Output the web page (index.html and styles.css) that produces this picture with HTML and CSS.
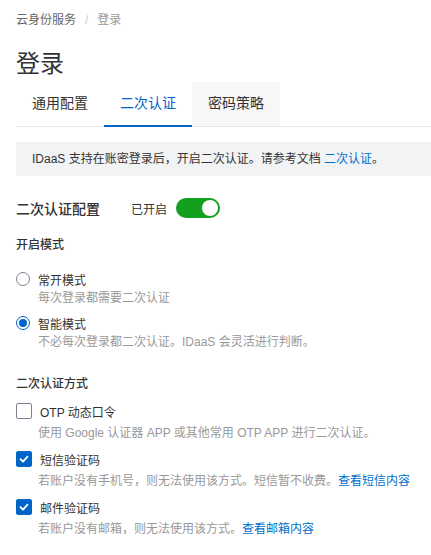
FILE: index.html
```html
<!DOCTYPE html>
<html lang="zh-CN">
<head>
    <meta charset="UTF-8">
    <meta name="viewport" content="width=device-width, initial-scale=1.0">
    <title>登录 - 二次认证</title>
    <link rel="stylesheet" href="styles.css">
</head>
<body>
    <div class="page">
        <div class="breadcrumb">
            <span>云身份服务</span>
            <span class="sep">/</span>
            <span class="current">登录</span>
        </div>
        <h1 class="title">登录</h1>

        <div class="tabs">
            <div class="tab">通用配置</div>
            <div class="tab active">二次认证</div>
            <div class="tab muted">密码策略</div>
        </div>

        <div class="notice">IDaaS 支持在账密登录后，开启二次认证。请参考文档 <a href="#" class="link">二次认证</a>。</div>

        <div class="switch-row">
            <span class="switch-title">二次认证配置</span>
            <span class="switch-state">已开启</span>
            <span class="switch on"></span>
        </div>

        <!-- 开启模式 -->
        <div class="group-title">开启模式</div>
        <div class="radio-list">
            <div class="choice">
                <div class="option"><span class="radio"></span>常开模式</div>
                <div class="desc">每次登录都需要二次认证</div>
            </div>
            <div class="choice">
                <div class="option"><span class="radio checked"></span>智能模式</div>
                <div class="desc">不必每次登录都二次认证。IDaaS 会灵活进行判断。</div>
            </div>
        </div>

        <!-- 二次认证方式 -->
        <div class="group-title">二次认证方式</div>
        <div class="check-list">
            <div class="choice">
                <div class="option"><span class="checkbox"></span>OTP 动态口令</div>
                <div class="desc">使用 Google 认证器 APP 或其他常用 OTP APP 进行二次认证。</div>
            </div>
            <div class="choice">
                <div class="option">
                    <span class="checkbox checked"><svg viewBox="0 0 16 16" width="16" height="16"><polyline points="4.5,8.2 7,10.6 11.5,5.6" fill="none" stroke="#fff" stroke-width="1.8" stroke-linecap="round" stroke-linejoin="round"/></svg></span>短信验证码
                </div>
                <div class="desc">若账户没有手机号，则无法使用该方式。短信暂不收费。<a href="#" class="link">查看短信内容</a></div>
            </div>
            <div class="choice">
                <div class="option">
                    <span class="checkbox checked"><svg viewBox="0 0 16 16" width="16" height="16"><polyline points="4.5,8.2 7,10.6 11.5,5.6" fill="none" stroke="#fff" stroke-width="1.8" stroke-linecap="round" stroke-linejoin="round"/></svg></span>邮件验证码
                </div>
                <div class="desc">若账户没有邮箱，则无法使用该方式。<a href="#" class="link">查看邮箱内容</a></div>
            </div>
        </div>
    </div>
</body>
</html>
```

FILE: styles.css
```css
body {
    margin: 0;
    padding: 0;
    overflow: hidden;
    background: #fff;
    font-family: "Liberation Sans", "Noto Sans CJK SC", sans-serif;
    color: #333;
}
.page {
    padding: 12px 0 0 16px;
}
.breadcrumb {
    display: flex;
    gap: 9px;
    font-size: 12px;
    line-height: 16px;
    color: #666;
}
.breadcrumb .sep {
    color: #ccc;
}
.breadcrumb .current {
    color: #999;
}
.title {
    margin: 20px 0 0;
    font-size: 24px;
    line-height: 32px;
    font-weight: normal;
    color: #333;
}
.tabs {
    display: flex;
    margin-top: 2px;
    border-bottom: 1px solid #e6e6e6;
}
.tab {
    width: 88px;
    height: 45px;
    line-height: 43px;
    box-sizing: border-box;
    text-align: center;
    font-size: 14px;
    color: #333;
    border-bottom: 2px solid transparent;
    margin-bottom: -1px;
}
.tab.active {
    color: #0064c8;
    border-bottom-color: #0064c8;
}
.tab.muted {
    background: #f7f7f7;
    border-bottom-color: #f7f7f7;
    height: 44px;
    margin-bottom: 0;
}
.notice {
    margin-top: 15px;
    height: 34px;
    line-height: 34px;
    padding: 0 16px;
    background: #f2f3f5;
    font-size: 12px;
    color: #333;
}
.link {
    color: #0070cc;
    text-decoration: none;
}
.switch-row {
    display: flex;
    align-items: center;
    height: 20px;
    margin-top: 22px;
}
.switch-title {
    width: 115px;
    font-size: 14px;
    font-weight: 500;
}
.switch-state {
    font-size: 12px;
    margin-right: 9px;
}
.switch {
    position: relative;
    width: 44px;
    height: 20px;
    border-radius: 10px;
    background: #ccc;
}
.switch.on {
    background: #12a01e;
}
.switch::after {
    content: "";
    position: absolute;
    top: 2px;
    left: 2px;
    width: 16px;
    height: 16px;
    border-radius: 50%;
    background: #fff;
}
.switch.on::after {
    left: auto;
    right: 2px;
}
.group-title {
    margin-top: 19px;
    font-size: 12px;
    line-height: 16px;
    font-weight: 500;
    color: #333;
}
.radio-list + .group-title {
    margin-top: 26px;
}
.radio-list,
.check-list {
    display: flex;
    flex-direction: column;
}
.radio-list {
    margin-top: 16px;
    gap: 7px;
}
.check-list {
    margin-top: 9px;
    gap: 8px;
}
.option {
    display: flex;
    align-items: center;
    gap: 8px;
    height: 20px;
    font-size: 12px;
    color: #333;
}
.desc {
    margin-top: 1px;
    padding-left: 22px;
    font-size: 12px;
    line-height: 16px;
    color: #999;
}
.check-list .desc {
    margin-top: 4px;
}
.radio {
    width: 14px;
    height: 14px;
    box-sizing: border-box;
    border: 1px solid #7a8290;
    border-radius: 50%;
    display: flex;
    align-items: center;
    justify-content: center;
}
.radio.checked {
    border-color: #0064c8;
}
.radio.checked::after {
    content: "";
    width: 8px;
    height: 8px;
    border-radius: 50%;
    background: #0064c8;
}
.checkbox {
    width: 16px;
    height: 16px;
    box-sizing: border-box;
    border: 1px solid #7a8290;
    border-radius: 2px;
    display: flex;
}
.checkbox.checked {
    background: #0064c8;
    border-color: #0064c8;
}
.checkbox svg {
    margin: -1px;
}
```
